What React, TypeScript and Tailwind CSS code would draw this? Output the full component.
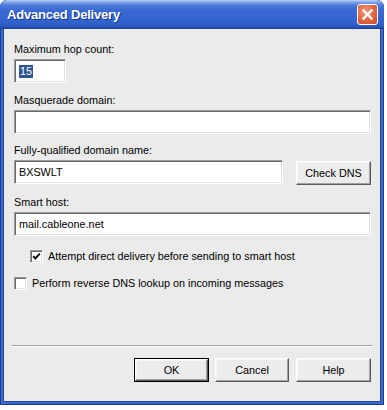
import React from "react";

const sunken =
  "border border-t-[#9a9a9a] border-l-[#9a9a9a] border-b-white border-r-white shadow-[inset_1px_1px_0_#6a6a6a,inset_-1px_-1px_0_#e2e2e2] bg-white";
const raised =
  "border border-t-white border-l-white border-b-[#5a5a5a] border-r-[#5a5a5a] shadow-[inset_-1px_-1px_0_#a0a0a0,inset_1px_1px_0_#f6f6f6] bg-[#ececec]";

function Label({ children, className = "" }: { children: React.ReactNode; className?: string }) {
  return <div className={`h-[13px] leading-[13px] mb-[3px] ${className}`}>{children}</div>;
}

function TextBox({ children, className = "" }: { children?: React.ReactNode; className?: string }) {
  return (
    <div className={`h-[24px] flex items-center pl-[4px] leading-[13px] ${sunken} ${className}`}>
      {children}
    </div>
  );
}

function Button({ children, def = false, className = "w-[75px]" }: { children: React.ReactNode; def?: boolean; className?: string }) {
  if (def) {
    return (
      <div className={`h-[24px] border border-black ${className}`}>
        <div className={`w-full h-full flex items-center justify-center ${raised}`}>{children}</div>
      </div>
    );
  }
  return <div className={`h-[24px] flex items-center justify-center ${raised} ${className}`}>{children}</div>;
}

function CheckBox({ checked }: { checked: boolean }) {
  return (
    <div className={`w-[13px] h-[13px] shrink-0 flex items-center justify-center ${sunken}`}>
      {checked && (
        <svg width="9" height="9" viewBox="0 0 9 9">
          <polyline points="1.2,4.2 3.3,6.5 7.8,1.6" fill="none" stroke="#111" strokeWidth="1.9" />
        </svg>
      )}
    </div>
  );
}

export default function App() {
  return (
    <div className="w-[387px] h-[410px] bg-white font-['Liberation_Sans',Arial,sans-serif] text-[10.8px] text-black">
      <div className="w-[384px] h-[405px] flex flex-col rounded-t-[7px] overflow-hidden bg-[#3d69cf] shadow-[inset_0_0_0_1px_#1c3c95]">
        {/* title bar */}
        <div className="h-[29px] shrink-0 flex items-center justify-between pl-[7px] pr-[6px] bg-[linear-gradient(to_bottom,#bcd2f6_0px,#86a9ea_2px,#4f7ddb_5px,#3a69d3_10px,#3464cd_20px,#2c5bc4_26px,#1d3f95_29px)] rounded-t-[7px]">
          <span className="text-white font-bold text-[13px] tracking-[-0.2px] [text-shadow:1px_1px_0_#15358a] pt-[1px]">
            Advanced Delivery
          </span>
          <div className="w-[21px] h-[21px] rounded-[3px] border border-white flex items-center justify-center bg-[radial-gradient(circle_at_40%_35%,#f39a7a_0%,#e0653f_55%,#c2482a_100%)]">
            <svg width="13" height="13" viewBox="0 0 13 13">
              <path d="M2.5 2.5 L10.5 10.5 M10.5 2.5 L2.5 10.5" stroke="white" strokeWidth="2.3" strokeLinecap="square" />
            </svg>
          </div>
        </div>
        {/* body */}
        <div className="flex-1 flex flex-col px-[3px] pb-[3px]">
          <div className="flex-1 flex flex-col bg-[#ebebeb] border border-t-0 border-[#27479f] pl-[10px] pr-[9px] pt-[14px] pb-[19px]">
            <Label>Maximum hop count:</Label>
            <TextBox className="w-[52px]">
              <span className="bg-[#2f5590] text-white px-[1px]">15</span>
            </TextBox>

            <Label className="mt-[11px]">Masquerade domain:</Label>
            <TextBox />

            <Label className="mt-[10px]">Fully-qualified domain name:</Label>
            <div className="flex items-start gap-[13px]">
              <TextBox className="w-[270px]">BXSWLT</TextBox>
              <div className="pt-[1px]">
                <Button>Check DNS</Button>
              </div>
            </div>

            <Label className="mt-[11px]">Smart host:</Label>
            <TextBox>mail.cableone.net</TextBox>

            <div className="mt-[14px] h-[13px] flex items-center gap-[5px] pl-[16px]">
              <CheckBox checked />
              <span className="leading-[13px]">Attempt direct delivery before sending to smart host</span>
            </div>
            <div className="mt-[14px] h-[13px] flex items-center gap-[5px]">
              <CheckBox checked={false} />
              <span className="leading-[13px]">Perform reverse DNS lookup on incoming messages</span>
            </div>

            <div className="flex-1" />
            <div className="ml-[-2px] mr-[-1px] h-[2px] border-t border-t-[#a0a0a0] border-b border-b-white" />
            <div className="mt-[11px] flex justify-end">
              <Button def>OK</Button>
              <Button className="w-[74px] ml-[6px]">Cancel</Button>
              <Button className="w-[75px] ml-[7px]">Help</Button>
            </div>
          </div>
        </div>
      </div>
    </div>
  );
}
